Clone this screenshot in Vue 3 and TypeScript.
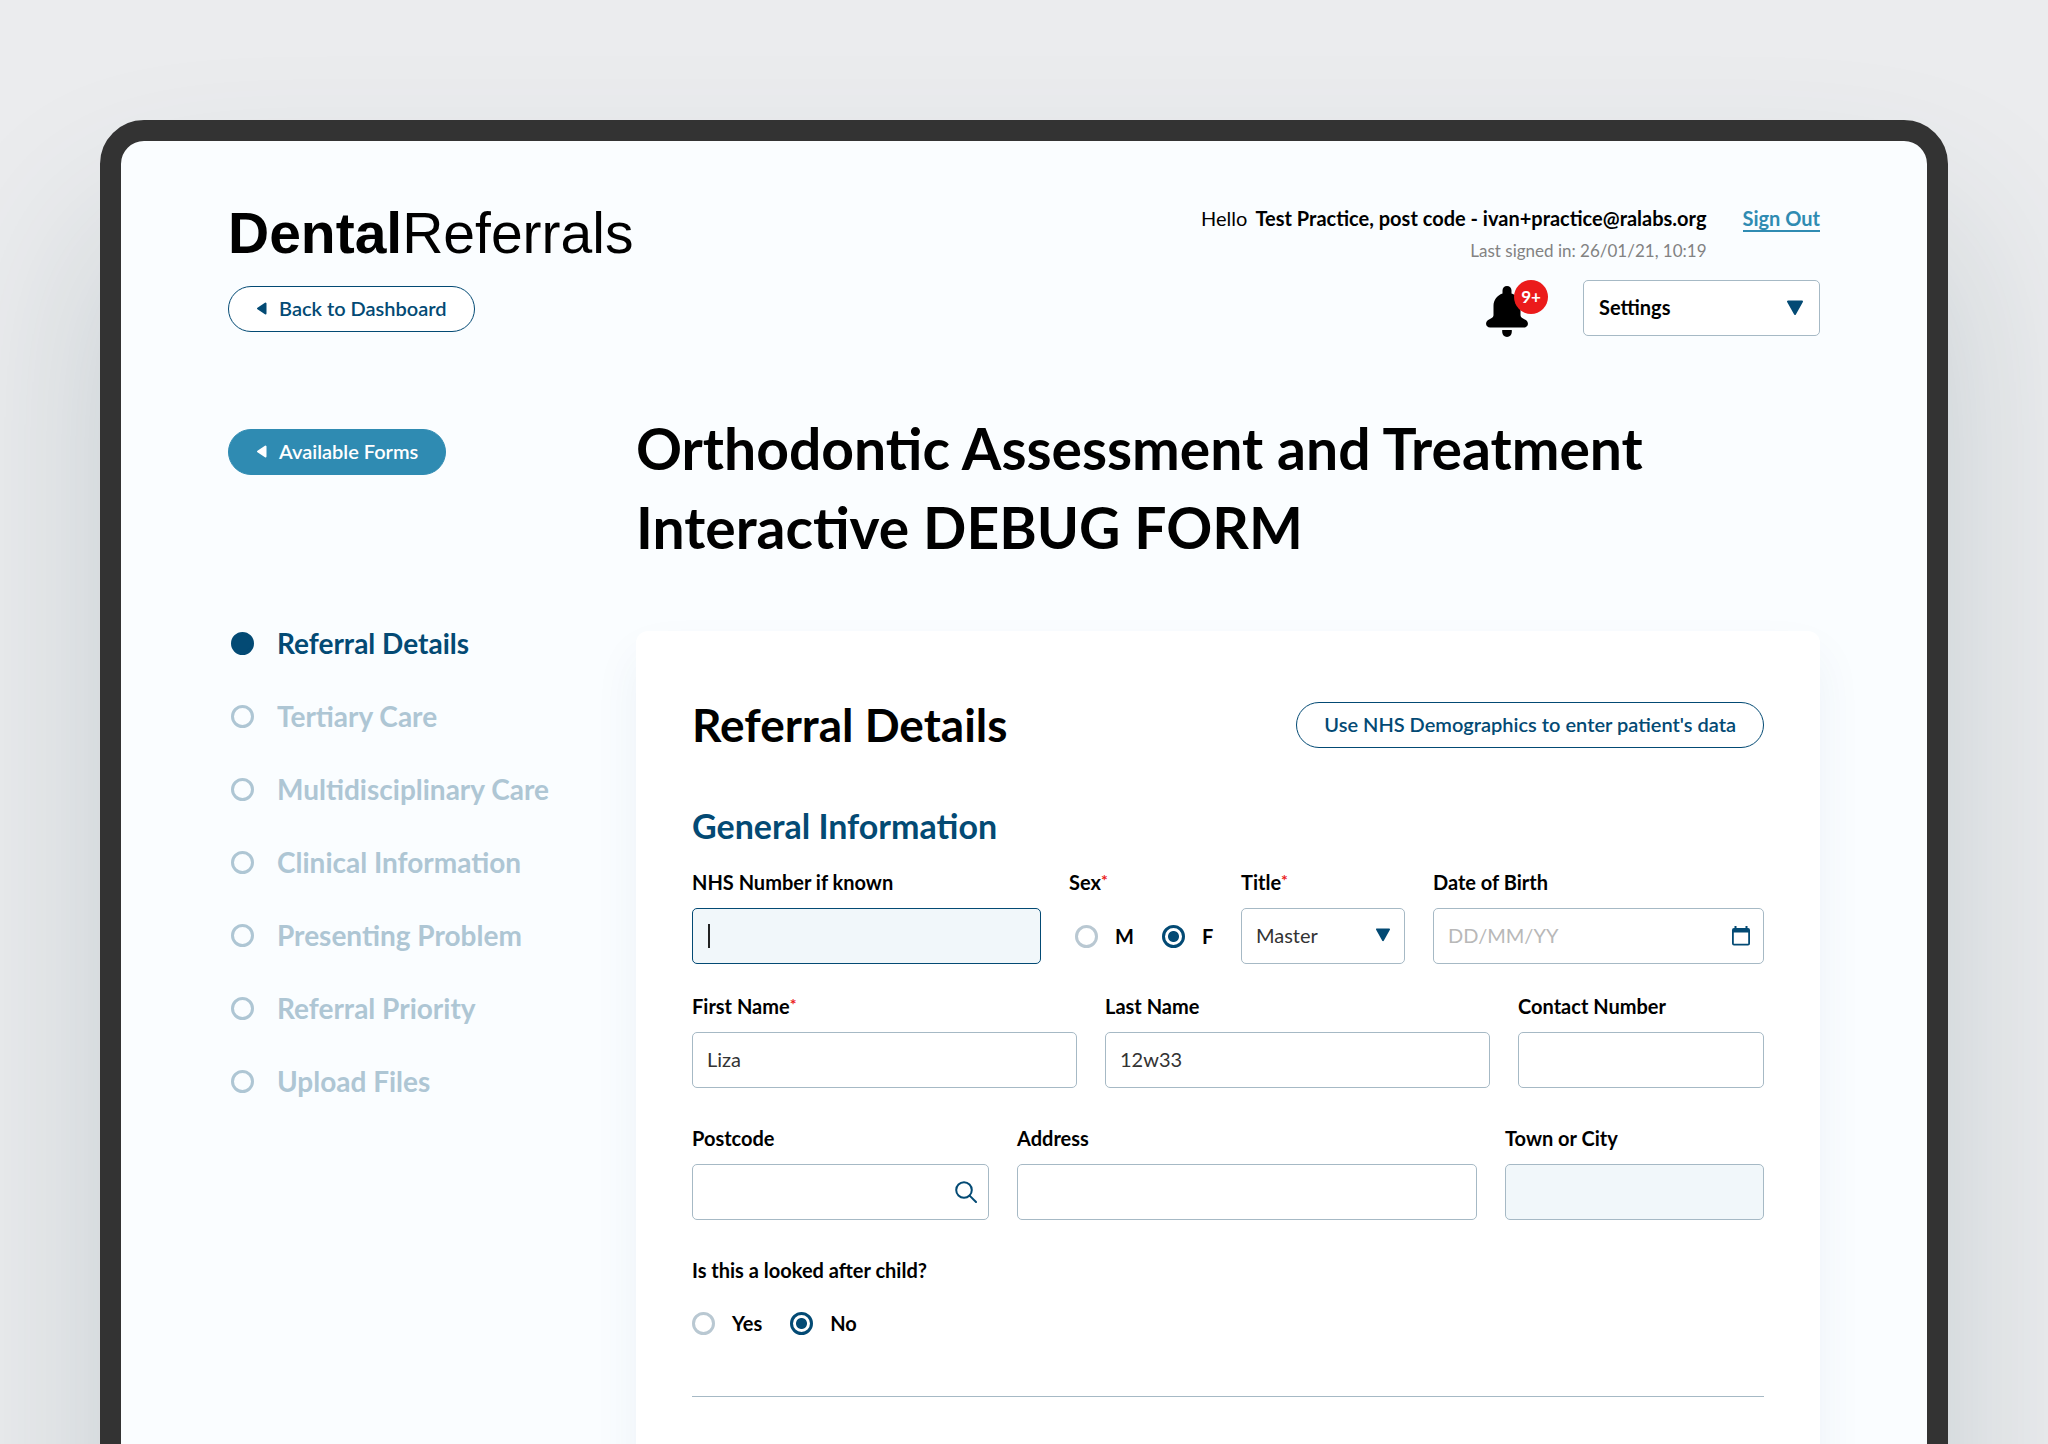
<script setup lang="ts">
import { ref } from 'vue'

const steps: string[] = [
  'Referral Details',
  'Tertiary Care',
  'Multidisciplinary Care',
  'Clinical Information',
  'Presenting Problem',
  'Referral Priority',
  'Upload Files',
]
const current = ref(0)

const nhsNumber = ref('')
const sex = ref('F')
const title = ref('Master')
const birthDate = ref('')
const firstName = ref('Liza')
const lastName = ref('12w33')
const contact = ref('')
const postcode = ref('')
const address = ref('')
const town = ref('')
const lookedAfter = ref('No')
</script>

<template>
  <div class="stage">
    <div class="device">
      <header class="header">
        <div class="brand">
          <a class="logo" href="#"><b>Dental</b>Referrals</a>
          <button class="pill outline" type="button">
            <svg class="back" viewBox="0 0 10 13" aria-hidden="true">
              <path d="M9 1.5v10L1.5 6.5Z" />
            </svg>
            Back to Dashboard
          </button>
        </div>
        <div class="account">
          <div class="account-row">
            <div class="identity">
              <div class="hello">Hello <b>Test Practice, post code - ivan+practice@ralabs.org</b></div>
              <div class="last">Last signed in: 26/01/21, 10:19</div>
            </div>
            <a class="signout" href="#">Sign Out</a>
          </div>
          <div class="tools">
            <button class="bell" type="button" aria-label="Notifications">
              <svg viewBox="0 0 42 51" aria-hidden="true">
                <path d="M21 0c2.6 0 4.500 2 4.500 4.500v3c5.500 2 9 6.500 9 12.500v9c0 3 3 3.500 5.300 5 3.800 2.800 2.200 7.500-2 7.500H4.200c-4.200 0-5.800-4.700-2-7.500C4.500 32.500 7.500 32 7.500 29v-9c0-6 3.500-10.500 9-12.500v-3C16.500 2 18.400 0 21 0Z" />
                <path d="M16.200 44h9.600v1.800c0 2.900-2 5.200-4.800 5.200s-4.800-2.300-4.800-5.200Z" />
              </svg>
              <span class="badge">9+</span>
            </button>
            <div class="control settings">
              <select aria-label="Settings">
                <option>Settings</option>
              </select>
              <svg class="caret" viewBox="0 0 18 16" aria-hidden="true">
                <path d="M2 1.500h14L9 14Z" />
              </svg>
            </div>
          </div>
        </div>
      </header>

      <div class="intro">
        <div>
          <button class="pill solid" type="button">
            <svg class="back" viewBox="0 0 10 13" aria-hidden="true">
              <path d="M9 1.5v10L1.5 6.5Z" />
            </svg>
            Available Forms
          </button>
        </div>
        <h1>Orthodontic Assessment and Treatment Interactive DEBUG FORM</h1>
      </div>

      <div class="body">
        <nav class="steps" aria-label="Form sections">
          <a
            v-for="(step, i) in steps"
            :key="step"
            href="#"
            class="step"
            :class="{ active: i === current }"
            @click.prevent="current = i"
          >
            <span class="dot"></span>{{ step }}
          </a>
        </nav>

        <main class="card">
          <div class="card-head">
            <h2>Referral Details</h2>
            <button class="pill outline" type="button">Use NHS Demographics to enter patient's data</button>
          </div>

          <h3>General Information</h3>
          <form @submit.prevent>
            <div class="row row-id">
              <div class="field">
                <label for="nhs">NHS Number if known</label>
                <div class="control current">
                  <input id="nhs" v-model="nhsNumber" type="text" />
                  <span class="cursor"></span>
                </div>
              </div>
              <div class="field" role="radiogroup" aria-labelledby="sex-label">
                <span id="sex-label" class="label">Sex<sup>*</sup></span>
                <div class="options sex">
                  <label class="option"><input v-model="sex" type="radio" name="sex" value="M" />M</label>
                  <label class="option"><input v-model="sex" type="radio" name="sex" value="F" />F</label>
                </div>
              </div>
              <div class="field">
                <label for="title">Title<sup>*</sup></label>
                <div class="control title">
                  <select id="title" v-model="title">
                    <option>Master</option>
                    <option>Miss</option>
                    <option>Mr</option>
                    <option>Mrs</option>
                  </select>
                  <svg class="caret" viewBox="0 0 18 16" aria-hidden="true">
                    <path d="M2 1.500h14L9 14Z" />
                  </svg>
                </div>
              </div>
              <div class="field">
                <label for="dob">Date of Birth</label>
                <div class="control">
                  <input id="dob" v-model="birthDate" type="text" placeholder="DD/MM/YY" />
                  <svg class="glyph" viewBox="0 0 22 22" aria-hidden="true">
                    <path
                      fill="#034a74"
                      fill-rule="evenodd"
                      d="M4.500 1h2v2h9V1h2v2H18a2 2 0 0 1 2 2v13.500a2 2 0 0 1-2 2H4a2 2 0 0 1-2-2V5a2 2 0 0 1 2-2h.5ZM3.800 7.500v11.300h14.400V7.500Z"
                    />
                  </svg>
                </div>
              </div>
            </div>

            <div class="row row-name">
              <div class="field">
                <label for="first">First Name<sup>*</sup></label>
                <div class="control"><input id="first" v-model="firstName" type="text" /></div>
              </div>
              <div class="field">
                <label for="last">Last Name</label>
                <div class="control"><input id="last" v-model="lastName" type="text" /></div>
              </div>
              <div class="field">
                <label for="contact">Contact Number</label>
                <div class="control"><input id="contact" v-model="contact" type="tel" /></div>
              </div>
            </div>

            <div class="row row-address">
              <div class="field">
                <label for="postcode">Postcode</label>
                <div class="control">
                  <input id="postcode" v-model="postcode" type="text" />
                  <svg class="glyph" viewBox="0 0 22 22" fill="none" stroke="#034a74" stroke-width="2" aria-hidden="true">
                    <circle cx="9" cy="9" r="7.800" />
                    <path d="m14.600 14.600 6.400 6.400" stroke-linecap="round" />
                  </svg>
                </div>
              </div>
              <div class="field">
                <label for="address">Address</label>
                <div class="control"><input id="address" v-model="address" type="text" /></div>
              </div>
              <div class="field">
                <label for="town">Town or City</label>
                <div class="control"><input id="town" v-model="town" class="filled" type="text" /></div>
              </div>
            </div>

            <div class="question" role="radiogroup" aria-labelledby="care-label">
              <span id="care-label" class="label">Is this a looked after child?</span>
              <div class="options">
                <label class="option"><input v-model="lookedAfter" type="radio" name="care" value="Yes" />Yes</label>
                <label class="option"><input v-model="lookedAfter" type="radio" name="care" value="No" />No</label>
              </div>
            </div>
            <hr />
          </form>
        </main>
      </div>
    </div>
  </div>
</template>

<style>
body {
  margin: 0;
  background: #ebecee;
}
</style>

<style scoped>
*,
*::before,
*::after {
  box-sizing: border-box;
}

.stage {
  height: 100vh;
  padding: 120px 100px 0;
  overflow: hidden;
  font: 20px/24px Lato, "Liberation Sans", sans-serif;
  color: #000;
}

.device {
  min-height: 150vh;
  padding: 64px 107px 0;
  border: 21px solid #333;
  border-radius: 44px;
  background: #fafdff;
  box-shadow: 0 110px 180px rgba(50, 85, 95, 0.2);
}

button,
input,
select {
  margin: 0;
  font: inherit;
  color: inherit;
}

a {
  color: inherit;
  text-decoration: none;
}

/* Header */
.header {
  display: flex;
  justify-content: space-between;
}

.brand {
  display: flex;
  flex-direction: column;
  align-items: flex-start;
  gap: 25px;
}

.logo {
  font: 57px/56px "Liberation Sans", Arial, sans-serif;
}

.pill {
  display: inline-flex;
  align-items: center;
  gap: 12px;
  height: 46px;
  padding: 0 27px 2px;
  border: 1px solid #034a74;
  border-radius: 23px;
  font-weight: 600;
  white-space: nowrap;
  cursor: pointer;
}

.outline {
  background: #fff;
  color: #034a74;
}

.solid {
  border-color: #2f8bb2;
  background: #2f8bb2;
  color: #fff;
}

.back {
  width: 11px;
  height: 13px;
  fill: currentColor;
  stroke: currentColor;
  stroke-width: 2;
  stroke-linejoin: round;
}

.account {
  display: flex;
  flex-direction: column;
  align-items: flex-end;
  gap: 17px;
}

.account-row {
  display: flex;
  align-items: flex-start;
  gap: 36px;
  padding-top: 1px;
}

.identity {
  display: flex;
  flex-direction: column;
  gap: 9px;
  text-align: right;
}

.hello b {
  margin-left: 3px;
}

.last {
  font-size: 17px;
  color: #828282;
}

.signout {
  border-bottom: 2px solid #2f8bb2;
  font-weight: 700;
  color: #2f8bb2;
}

.tools {
  display: flex;
  gap: 35px;
}

.bell {
  position: relative;
  width: 62px;
  padding: 6px 0 0;
  border: 0;
  background: none;
  text-align: left;
  cursor: pointer;
}

.bell svg {
  display: block;
  width: 42px;
  height: 51px;
}

.badge {
  position: absolute;
  top: 0;
  right: 0;
  width: 34px;
  height: 34px;
  border-radius: 50%;
  background: #eb1b1b;
  font-size: 17px;
  line-height: 34px;
  font-weight: 700;
  text-align: center;
  color: #fff;
}

/* Title */
.intro,
.body {
  display: grid;
  grid-template-columns: 408px minmax(0, 1fr);
}

.intro {
  margin-top: 72px;
}

.intro .pill {
  margin-top: 20px;
}

h1 {
  max-width: 1100px;
  margin: 0;
  font-size: 57px;
  line-height: 79px;
}

.body {
  margin-top: 64px;
}

/* Section list */
.steps {
  display: flex;
  flex-direction: column;
  gap: 49px;
  padding: 0 3px;
}

.step {
  display: flex;
  align-items: center;
  gap: 23px;
  font-size: 28px;
  line-height: 24px;
  font-weight: 700;
  color: #aec6d4;
}

.dot {
  width: 23px;
  height: 23px;
  border: 3px solid #aec6d4;
  border-radius: 50%;
}

.step.active {
  color: #034a74;
}

.active .dot {
  border-color: #034a74;
  background: #034a74;
}

/* Form card */
.card {
  min-height: 1100px;
  padding: 64px 56px;
  border-radius: 12px;
  background: #fff;
  box-shadow: 0 24px 48px rgba(3, 74, 116, 0.06);
}

.card-head {
  display: flex;
  align-items: center;
  justify-content: space-between;
}

h2 {
  margin: 0;
  font-size: 46px;
  line-height: 60px;
}

h3 {
  margin: 51px 0 24px;
  font-size: 34px;
  line-height: 40px;
  color: #034a74;
}

.row {
  display: grid;
  gap: 28px;
}

.row-id {
  grid-template-columns: 349fr 144fr 164fr 331fr;
}

.row-name {
  grid-template-columns: 385fr 385fr 246fr;
  margin-top: 30px;
}

.row-address {
  grid-template-columns: 297fr 460fr 259fr;
  margin-top: 38px;
}

.field {
  display: flex;
  flex-direction: column;
  gap: 14px;
  min-width: 0;
}

label,
.label {
  font-weight: 700;
}

sup {
  font-size: 16px;
  line-height: 0;
  vertical-align: 4px;
  color: #eb1b1b;
}

.control {
  position: relative;
}

.control input,
.control select {
  display: block;
  width: 100%;
  height: 56px;
  padding: 0 14px 2px;
  border: 1px solid #a6b9c5;
  border-radius: 5px;
  outline: 0;
  background: #fff;
  color: #333;
  appearance: none;
}

.control input::placeholder {
  color: #b8b8b8;
  opacity: 1;
}

.control .filled {
  background: #f1f7fa;
}

.control.current input {
  border-color: #034a74;
  background: #f1f7fa;
}

.cursor {
  position: absolute;
  top: 16px;
  left: 16px;
  width: 2px;
  height: 24px;
  background: #222;
}

.settings {
  width: 237px;
}

.settings select {
  padding-left: 15px;
  font-weight: 700;
  color: #000;
}

.caret {
  position: absolute;
  top: 20px;
  right: 16px;
  width: 18px;
  height: 16px;
  fill: #034a74;
  stroke: #034a74;
  stroke-width: 2;
  stroke-linejoin: round;
  pointer-events: none;
}

.title .caret {
  right: 14px;
  width: 16px;
  height: 14px;
}

.glyph {
  position: absolute;
  top: 17px;
  right: 12px;
  width: 22px;
  height: 22px;
  pointer-events: none;
}

.options {
  display: flex;
  gap: 28px;
}

.sex {
  align-items: center;
  height: 56px;
  padding-left: 6px;
}

.option {
  display: flex;
  align-items: center;
  gap: 17px;
}

.option input {
  width: 23px;
  height: 23px;
  border: 3px solid #b9c8d2;
  border-radius: 50%;
  background: #fff;
  appearance: none;
}

.option input:checked {
  border-color: #034a74;
  background: radial-gradient(circle, #034a74 5px, #fff 6px);
}

.question {
  display: flex;
  flex-direction: column;
  gap: 29px;
  margin-top: 38px;
}

hr {
  margin: 61px 0 0;
  border: 0;
  border-top: 1px solid #a6b9c5;
}
</style>
